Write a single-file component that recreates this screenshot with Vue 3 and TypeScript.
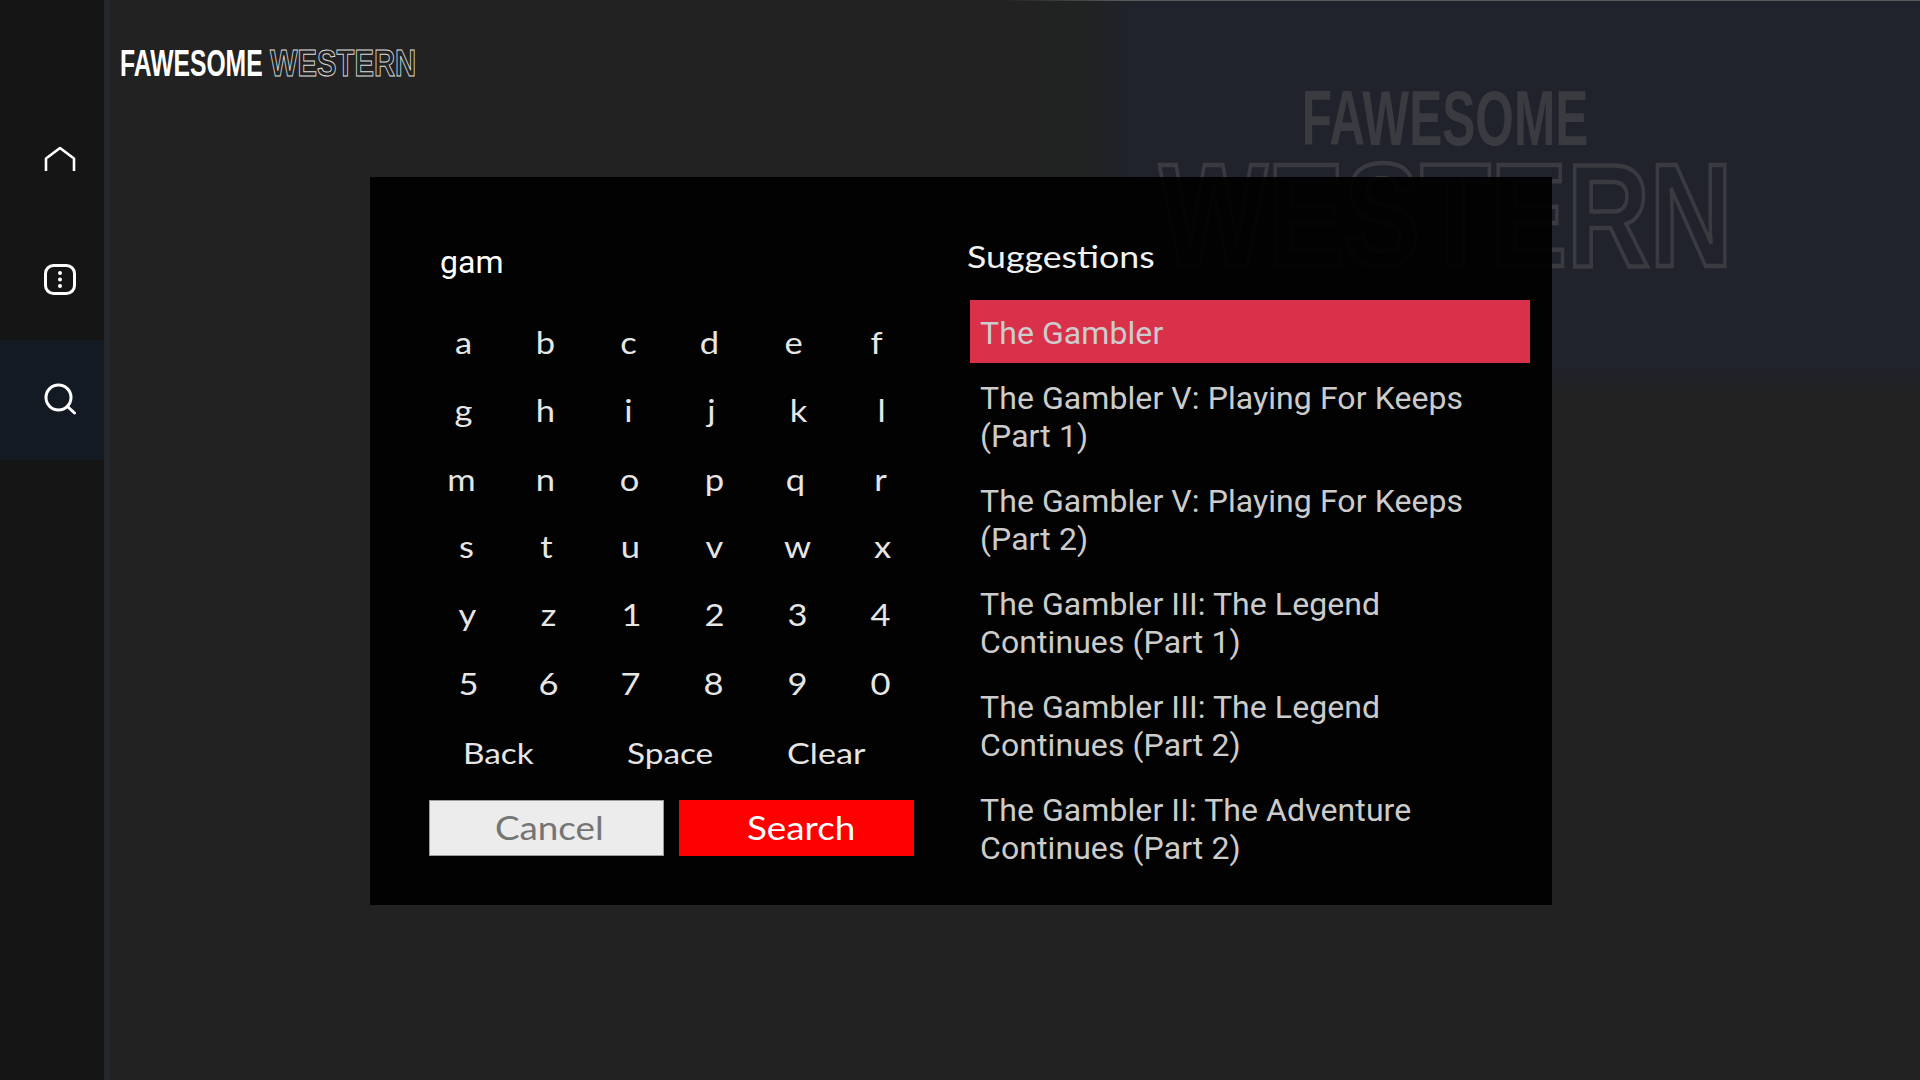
<script setup lang="ts">
interface Key { c: string; dx: number; dy: number }
const colX = (i: number): number => 463 + 83 * i
const rows: [string, number, number[]][] = [
  ['abcdef', -2, [464, 546, 629, 710, 794, 877]],
  ['ghijkl', -2, [464, 546, 629, 712, 799, 882]],
  ['mnopqr', -1, [462, 546, 630, 715, 796, 881]],
  ['stuvwx', -3, [467, 547, 631, 715, 798, 883]],
  ['yz1234', -3, [468, 549, 632, 715, 798, 881]],
  ['567890', -2, [469, 549, 631, 714, 798, 881]],
]
const keyRows: Key[][] = rows.map(([s, dy, xs]) => s.split('').map((c, i) => ({ c, dy, dx: xs[i] - colX(i) })))
const suggestions = [
  'The Gambler',
  'The Gambler V: Playing For Keeps (Part 1)',
  'The Gambler V: Playing For Keeps (Part 2)',
  'The Gambler III: The Legend Continues (Part 1)',
  'The Gambler III: The Legend Continues (Part 2)',
  'The Gambler II: The Adventure Continues (Part 2)',
]
</script>

<template>
  <div class="page">
    <aside class="rail">
      <div class="nav">
        <svg viewBox="0 0 32 28" width="32" height="28" fill="none" stroke="#fff" stroke-width="2.6">
          <path d="M2 25 V12.5 L16 2 L30 12.5 V25" stroke-linejoin="round" />
        </svg>
      </div>
      <div class="nav">
        <svg viewBox="0 0 32 32" width="32" height="32" fill="none" stroke="#fff" stroke-width="3">
          <rect x="1.5" y="1.5" width="29" height="28" rx="8" />
          <circle cx="16" cy="9" r="2" fill="#fff" stroke="none" />
          <circle cx="16" cy="15.5" r="2" fill="#fff" stroke="none" />
          <circle cx="16" cy="22" r="2" fill="#fff" stroke="none" />
        </svg>
      </div>
      <div class="nav active">
        <svg class="lens" viewBox="0 0 32 32" width="32" height="32" fill="none" stroke="#fff" stroke-width="3">
          <circle cx="14.5" cy="14.5" r="12.5" />
          <path d="M24 24 L30.5 30" stroke-linecap="round" />
        </svg>
      </div>
    </aside>
    <div class="strip"></div>
    <main class="main">
      <div class="hero">
        <div class="mark">
          <div class="mark-a">FAWESOME</div>
          <div class="mark-b">WESTERN</div>
        </div>
      </div>
      <header class="logo">
        <span class="logo-a">FAWESOME</span>
        <span class="logo-b">WESTERN</span>
      </header>
      <section class="dialog">
        <div class="left">
          <div class="query">gam</div>
          <div class="keys">
            <div v-for="(r, i) in keyRows" :key="i" class="row">
              <span v-for="k in r" :key="k.c" class="key" :style="{ transform: `translate(${k.dx}px, ${k.dy}px) scaleX(1.15)` }">{{ k.c }}</span>
            </div>
          </div>
          <div class="actions">
            <span class="act back">Back</span>
            <span class="act space">Space</span>
            <span class="act clear">Clear</span>
          </div>
          <div class="buttons">
            <div class="btn cancel"><span>Cancel</span></div>
            <div class="btn search"><span>Search</span></div>
          </div>
        </div>
        <div class="right">
          <h2 class="title">Suggestions</h2>
          <ul class="list">
            <li v-for="(s, i) in suggestions" :key="s" :class="{ on: i === 0 }">{{ s }}</li>
          </ul>
        </div>
      </section>
    </main>
  </div>
</template>

<style>
html, body { margin: 0; background: #222; overflow: hidden; }
</style>

<style scoped>
.page { width: 1920px; height: 1080px; display: flex; background: #222; overflow: hidden; font-family: Lato, sans-serif; }
.rail { width: 104px; flex: none; background: #151515; padding-top: 100px; box-sizing: border-box; }
.nav { height: 120px; display: flex; align-items: center; justify-content: center; padding-left: 16px; box-sizing: border-box; }
.nav.active { background: #131a24; }
.lens { margin-top: -2px; }
.strip { width: 6px; flex: none; background: #24272c; }
.main { flex: 1; position: relative; }
.hero { position: absolute; right: 0; top: 0; width: 920px; height: 400px; box-sizing: border-box;
  background: linear-gradient(90deg, #222 0%, #212222 8%, #212225 11%, #20232b 14%, #20232b 100%); }
.hero::before { content: ""; position: absolute; left: 0; right: 0; top: 0; height: 1px; background: linear-gradient(90deg, rgba(90,92,92,0) 0%, #5a5c5c 14%, #5a5c5c 100%); }
.hero::after { content: ""; position: absolute; left: 0; right: 0; bottom: 0; height: 35px; background: linear-gradient(180deg, rgba(34,34,34,0), #222); }
.mark { position: absolute; left: 160px; top: 79px; width: 570px; font-family: "Liberation Sans", sans-serif; font-weight: 700; line-height: 1; white-space: nowrap; }
.mark-a { font-size: 78px; line-height: 78px; height: 63px; color: #3a3b40; display: flex; justify-content: center; transform: scaleX(.636); }
.mark-b { font-size: 147px; line-height: 147px; color: transparent; -webkit-text-stroke: 4.5px #3a3b40; display: flex; justify-content: center; transform: translateX(1px) scaleX(.78); }
.logo { position: absolute; left: 10px; top: 44px; display: flex; font-family: "Liberation Sans", sans-serif; font-weight: 700; font-size: 37px; line-height: 40px; color: #fff; white-space: nowrap; }
.logo-a { width: 150px; transform: scaleX(.667); transform-origin: left center; }
.logo-b { width: 146px; color: transparent; -webkit-text-stroke: 1px #ddd; transform: scaleX(.79); transform-origin: left center; }
.dialog { position: absolute; left: 260px; top: 177px; width: 1182px; height: 728px; background: rgba(0,0,0,.93); display: flex; box-sizing: border-box; }
.left { width: 600px; flex: none; padding-left: 59px; box-sizing: border-box; color: #e6e6e6; }
.query { font-family: Roboto, sans-serif; font-size: 32px; line-height: 40px; color: #fff; margin-top: 65px; margin-left: 11px; }
.keys { margin-top: 28px; margin-left: -8px; display: flex; flex-direction: column; }
.row { display: grid; grid-template-columns: repeat(6, 83px); height: 68.2px; font-size: 30px; line-height: 68px; }
.key { display: block; text-align: center; }
.actions { position: relative; height: 70px; font-size: 29px; line-height: 67px; }
.act { position: absolute; transform: scaleX(1.15); transform-origin: left center; }
.back { left: 34px; }
.space { left: 198px; }
.clear { left: 358px; transform: scaleX(1.18); }
.buttons { display: flex; gap: 15px; margin-top: 11px; }
.btn { width: 235px; height: 56px; display: flex; align-items: center; justify-content: center; font-size: 32px; box-sizing: border-box; }
.btn span { transform: scaleX(1.15); margin-top: -2px; }
.cancel { background: #ececec; color: #757575; border: 1px solid #9a9a9a; padding-left: 5px; }
.search { background: #f00; color: #fff; padding-left: 10px; }
.right { flex: 1; padding-top: 58px; }
.title { margin: 0 0 0 -3px; font-family: Lato, sans-serif; font-size: 30px; font-weight: 400; line-height: 42px; color: #f2f2f2; transform: scaleX(1.19); transform-origin: left center; }
.list { list-style: none; margin: 23px 0 0 0; padding: 0; width: 560px; font-family: Roboto, sans-serif; font-weight: 400; font-size: 32px; line-height: 38px; letter-spacing: .08px; color: #ccc; }
.list li { padding: 16px 10px 11px; }
.list li.on { background: #da314b; height: 63px; box-sizing: border-box; padding-top: 14px; padding-bottom: 11px; }
</style>
